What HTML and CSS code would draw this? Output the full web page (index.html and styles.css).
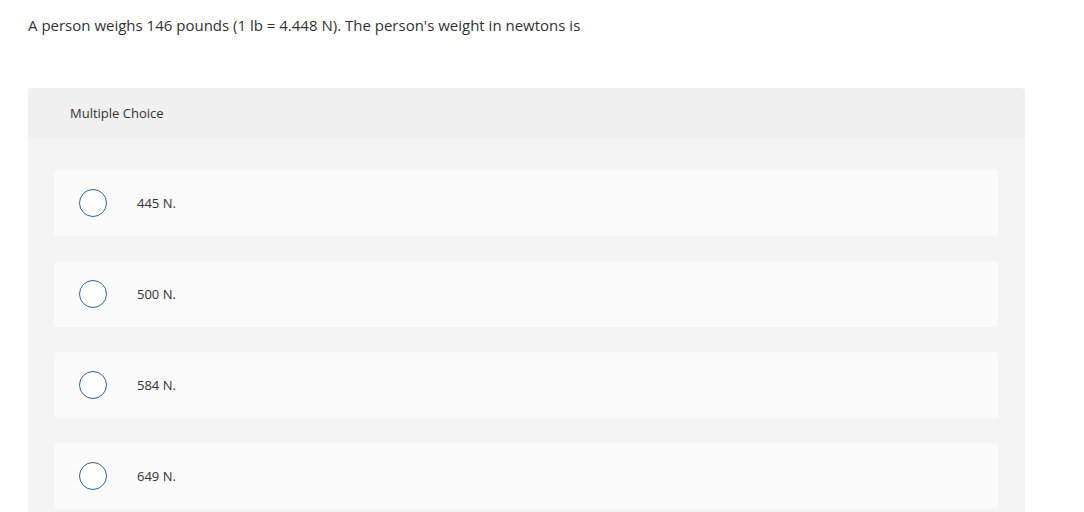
FILE: index.html
```html
<!DOCTYPE html>
<html>
<head>
<meta charset="utf-8">
<link rel="stylesheet" href="styles.css">
</head>
<body>
<p class="question">A person weighs 146 pounds (1 lb = 4.448 N). The person's weight in newtons is</p>
<div class="panel">
  <div class="panel-head">Multiple Choice</div>
  <div class="panel-body">
    <div class="choice"><span class="radio"></span><span class="label">445 N.</span></div>
    <div class="choice"><span class="radio"></span><span class="label">500 N.</span></div>
    <div class="choice"><span class="radio"></span><span class="label">584 N.</span></div>
    <div class="choice"><span class="radio"></span><span class="label">649 N.</span></div>
  </div>
</div>
</body>
</html>
```
FILE: styles.css
```css
html, body {
  margin: 0;
  padding: 0;
  background: #ffffff;
}
body {
  font-family: "Open Sans", "Liberation Sans", sans-serif;
  color: #333333;
  padding: 0 28px;
  overflow: hidden;
}
.question {
  margin: 0;
  padding-top: 15px;
  font-size: 15px;
  line-height: 20px;
  height: 73px;
}
.panel {
  width: 997px;
  border-radius: 4px 4px 0 0;
  background: #f4f4f4;
  overflow: hidden;
}
.panel-head {
  height: 50px;
  background: #f0f0f0;
  display: flex;
  align-items: center;
  padding-left: 42px;
  font-size: 13px;
  color: #333;
}
.panel-body {
  padding: 32px 27px 20px 26px;
  display: flex;
  flex-direction: column;
  gap: 25px;
}
.choice {
  height: 66px;
  background: #fafafa;
  border-radius: 3px;
  display: flex;
  align-items: center;
  padding-left: 25px;
}
.radio {
  width: 28px;
  height: 28px;
  box-sizing: border-box;
  border: 1.5px solid #2e6396;
  border-radius: 50%;
  background: #ffffff;
  flex: none;
}
.label {
  margin-left: 30px;
  font-size: 13px;
  color: #333;
}
```
